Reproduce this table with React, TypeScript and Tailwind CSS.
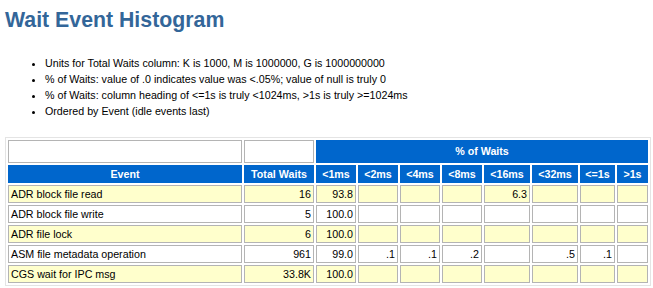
import React from 'react'

const NOTES = [
  'Units for Total Waits column: K is 1000, M is 1000000, G is 1000000000',
  '% of Waits: value of .0 indicates value was <.05%; value of null is truly 0',
  '% of Waits: column heading of <=1s is truly <1024ms, >1s is truly >=1024ms',
  'Ordered by Event (idle events last)',
]

const BUCKETS: { label: string; w: string }[] = [
  { label: '<1ms', w: 'w-[40px]' },
  { label: '<2ms', w: 'w-[40px]' },
  { label: '<4ms', w: 'w-[40px]' },
  { label: '<8ms', w: 'w-[40px]' },
  { label: '<16ms', w: 'w-[46px]' },
  { label: '<32ms', w: 'w-[46px]' },
  { label: '<=1s', w: 'w-[35px]' },
  { label: '>1s', w: 'w-[31px]' },
]

const ROWS: { event: string; total: string; pct: string[] }[] = [
  { event: 'ADR block file read', total: '16', pct: ['93.8', '', '', '', '6.3', '', '', ''] },
  { event: 'ADR block file write', total: '5', pct: ['100.0', '', '', '', '', '', '', ''] },
  { event: 'ADR file lock', total: '6', pct: ['100.0', '', '', '', '', '', '', ''] },
  { event: 'ASM file metadata operation', total: '961', pct: ['99.0', '.1', '.1', '.2', '', '.5', '.1', ''] },
  { event: 'CGS wait for IPC msg', total: '33.8K', pct: ['100.0', '', '', '', '', '', '', ''] },
]

export default function App() {
  const th = 'bg-[#0066cc] text-white font-bold text-center border border-[#0066cc] px-[1px]'
  const td = 'border border-[#b4b4b4] px-[2px] h-[18px] leading-none align-middle'

  return (
    <div className="w-[653px] h-[288px] bg-white overflow-hidden font-['Liberation_Sans',Arial,sans-serif] text-black">
      <h3 className="pl-[5px] pt-[8px] text-[21.3px] leading-[25px] font-bold text-[#336699]">Wait Event Histogram</h3>

      {/* notes */}
      <ul className="mt-[22px] ml-[5px] pl-[40px] list-disc text-[10.7px] leading-[16px]">
        {NOTES.map(n => <li key={n}>{n}</li>)}
      </ul>

      <table className="mt-[18px] ml-[5px] border-separate border-spacing-[2px] border border-[#e4e4e4] text-[10.7px]">
        <thead>
          <tr>
            <th className="border border-[#b4b4b4] h-[23px] bg-white"></th>
            <th className="border border-[#b4b4b4] h-[23px] bg-white"></th>
            <th colSpan={8} className={`${th} h-[23px]`}>% of Waits</th>
          </tr>
          <tr>
            <th className={`${th} h-[18px] w-[234px]`}>Event</th>
            <th className={`${th} h-[18px] w-[70px]`}>Total Waits</th>
            {BUCKETS.map(b => (
              <th key={b.label} className={`${th} h-[18px] ${b.w}`}>{b.label}</th>
            ))}
          </tr>
        </thead>
        <tbody>
          {ROWS.map((r, i) => {
            const bg = i % 2 === 0 ? 'bg-[#ffffcc]' : 'bg-white'
            return (
              <tr key={r.event}>
                <td className={`${td} ${bg} text-left`}>{r.event}</td>
                <td className={`${td} ${bg} text-right`}>{r.total}</td>
                {r.pct.map((p, j) => (
                  <td key={j} className={`${td} ${bg} text-right`}>{p}</td>
                ))}
              </tr>
            )
          })}
        </tbody>
      </table>
    </div>
  )
}
